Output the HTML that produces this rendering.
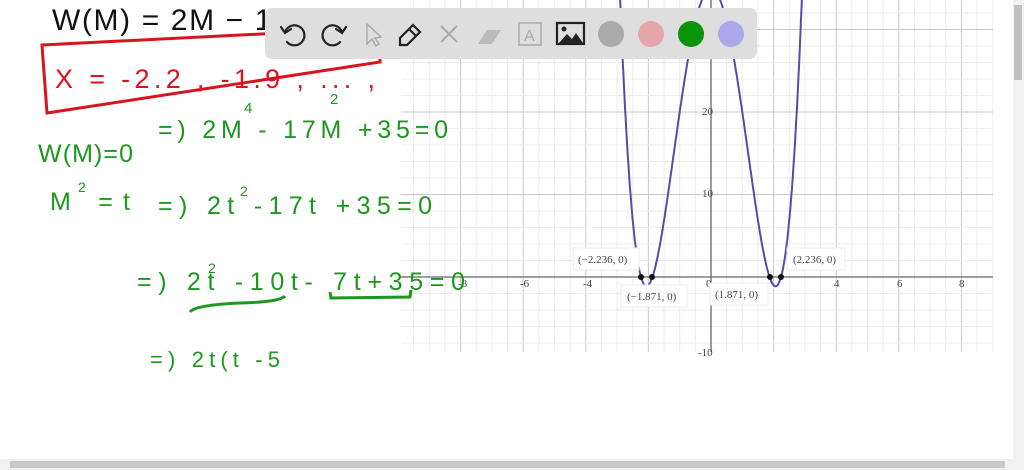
<!DOCTYPE html>
<html><head><meta charset="utf-8"><style>
body{margin:0;width:1024px;height:470px;overflow:hidden;background:#fff;position:relative;font-family:"Liberation Sans",sans-serif}
svg{position:absolute;left:0;top:0}
.tb{position:absolute;left:265px;top:8px;width:492px;height:51px;background:#dedede;border-radius:7px}
.hw{font-family:"Liberation Sans",sans-serif;fill:#1d971d}
.lbl{font-family:"Liberation Serif",serif;font-size:11px;fill:#444}
</style></head><body>
<svg width="1024" height="470" id="g">
<g id="grid"></g>
<g class="lbl" font-family="Liberation Sans" font-size="8" fill="#555">
<text x="458" y="287">-8</text><text x="520" y="287">-6</text><text x="583" y="287">-4</text>
<text x="706" y="287">0</text><text x="834" y="287">4</text><text x="897" y="287">6</text><text x="959" y="287">8</text>
<text x="702" y="115">20</text><text x="702" y="197">10</text><text x="698" y="356">-10</text>
</g>
<path id="curve" fill="none" stroke="#5a4aa6" stroke-width="2"/>
<g fill="#111"><circle cx="641" cy="277" r="3"/><circle cx="652" cy="277" r="3"/><circle cx="770" cy="277" r="3"/><circle cx="781" cy="277" r="3"/></g>
<g><rect x="573" y="248" width="66" height="22" fill="#fff" stroke="#eee"/><text class="lbl" x="578" y="263">(−2.236, 0)</text>
<rect x="787" y="248" width="58" height="22" fill="#fff" stroke="#eee"/><text class="lbl" x="793" y="263">(2.236, 0)</text>
<rect x="621" y="285" width="66" height="22" fill="#fff" stroke="#eee"/><text class="lbl" x="627" y="300">(−1.871, 0)</text>
<rect x="710" y="283" width="58" height="22" fill="#fff" stroke="#eee"/><text class="lbl" x="715" y="298">(1.871, 0)</text></g>
<text x="52" y="30" font-size="30" fill="#111" textLength="330" lengthAdjust="spacing">W(M) = 2M − 17M +35</text>
<polygon points="42,45 380,28 380,62 47,113" fill="none" stroke="#d8141e" stroke-width="3"/>
<text x="55" y="88" font-size="27" fill="#d8141e" textLength="320" lengthAdjust="spacing">X =  -2.2 , -1.9 , ... ,</text>
<text class="hw" x="38" y="162" font-size="25" textLength="95" lengthAdjust="spacing">W(M)=0</text>
<text class="hw" x="158" y="138" font-size="25" textLength="290" lengthAdjust="spacing">=)  2M - 17M  +35=0</text>
<text class="hw" x="244" y="113" font-size="15">4</text><text class="hw" x="330" y="104" font-size="15">2</text>
<text class="hw" x="50" y="210" font-size="25" textLength="80" lengthAdjust="spacing">M =t</text><text class="hw" x="78" y="192" font-size="14">2</text>
<text class="hw" x="158" y="214" font-size="25" textLength="274" lengthAdjust="spacing">=)  2t  -17t +35=0</text><text class="hw" x="240" y="196" font-size="14">2</text>
<text class="hw" x="137" y="290" font-size="25" textLength="328" lengthAdjust="spacing">=)  2t -10t-  7t+35=0</text><text class="hw" x="208" y="273" font-size="14">2</text>
<path d="M190 312 Q195 305 240 303 Q280 302 285 296" fill="none" stroke="#1d971d" stroke-width="3"/>
<path d="M330 292 L331 298 L410 297 L411 290" fill="none" stroke="#1d971d" stroke-width="3"/>
<text class="hw" x="150" y="367" font-size="22" textLength="130" lengthAdjust="spacing">=)  2t(t -5</text>
<rect x="1013" y="0" width="11" height="470" fill="#f1f1f1"/><rect x="1014" y="5" width="8" height="75" fill="#c1c1c1"/>
<rect x="0" y="459" width="1024" height="11" fill="#f1f1f1"/><rect x="10" y="461" width="995" height="7" fill="#c8c8c8"/>
</svg>
<div class="tb">
<svg width="492" height="51">
<g fill="none" stroke="#222" stroke-width="2.2" stroke-linecap="round">
<path d="M20 24 A10 10 0 1 1 22 34"/><path d="M16 19 L20 25 L26 21"/>
<path d="M77 24 A10 10 0 1 0 75 34"/><path d="M81 19 L77 25 L71 21"/>
</g>
<path d="M102 16 L102 36 L107 31 L111 38 L114 36 L110 30 L116 29 Z" fill="none" stroke="#aaa" stroke-width="1.5"/>
<path d="M135 30 L148 17 L155 24 L142 37 L135 37 Z M144 21 L151 28" fill="none" stroke="#222" stroke-width="2.2"/>
<path d="M176 18 L192 34 M192 18 L176 34" stroke="#aaa" stroke-width="2"/>
<path d="M213 36 L222 22 L236 22 L227 36 Z" fill="#bbb"/>
<rect x="254" y="15" width="22" height="22" fill="none" stroke="#aaa" stroke-width="1.5"/><text x="259" y="33" font-size="16" fill="#aaa">A</text>
<rect x="292" y="15" width="27" height="21" fill="none" stroke="#222" stroke-width="2.2"/><path d="M294 35 L302 26 L307 31 L311 25 L318 35 Z" fill="#222"/><circle cx="299" cy="21" r="2.5" fill="#222"/>
<circle cx="346" cy="26" r="13" fill="#aaa"/><circle cx="386" cy="26" r="13" fill="#e3a6aa"/><circle cx="426" cy="26" r="13" fill="#0a940a"/><circle cx="466" cy="26" r="13" fill="#aaaaea"/>
</svg></div>
<script>
var g=document.getElementById('grid'),s='';
var ox=711,oy=277,ux=31.3,uy=8.25;
for(var i=-20;i<=18;i++){var x=ox+i*ux/2;if(x<401||x>993)continue;s+='<line x1="'+x+'" y1="0" x2="'+x+'" y2="352" stroke="'+(i%4==0?'#c8c8c8':'#ececec')+'"/>';}
for(var j=-9;j<=40;j++){var y=oy-j*uy*2;if(y<0||y>352)continue;s+='<line x1="401" y1="'+y+'" x2="993" y2="'+y+'" stroke="'+(j%5==0?'#c8c8c8':'#ececec')+'"/>';}
s+='<line x1="401" y1="277" x2="993" y2="277" stroke="#666" stroke-width="1.3"/><line x1="711" y1="0" x2="711" y2="352" stroke="#666" stroke-width="1.3"/>';
g.innerHTML=s;
var d='';for(var x=-3.2;x<=3.2;x+=0.01){var y=2*x*x*x*x-17*x*x+35;var px=ox+x*ux,py=oy-y*uy;if(py<-20)py=-20;d+=(d?'L':'M')+px.toFixed(1)+' '+py.toFixed(1);}
document.getElementById('curve').setAttribute('d',d);
</script>
</body></html>
